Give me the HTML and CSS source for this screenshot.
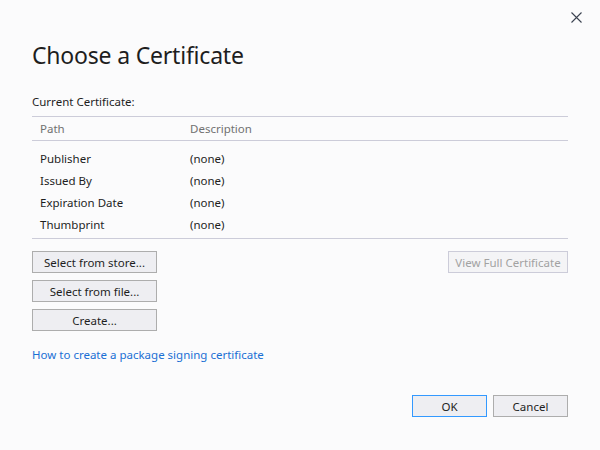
FILE: index.html
```html
<!DOCTYPE html>
<html>
<head>
<meta charset="utf-8">
<link rel="stylesheet" href="styles.css">
</head>
<body>
<div class="dialog">
  <div class="titlebar">
    <span class="close" aria-label="Close">
      <svg width="11" height="11" viewBox="0 0 11 11"><path d="M0.5 0.5 L10.5 10.5 M10.5 0.5 L0.5 10.5" stroke="#3b4250" stroke-width="1.1" fill="none"/></svg>
    </span>
  </div>
  <h1 class="title">Choose a Certificate</h1>
  <div class="label">Current Certificate:</div>
  <div class="table">
    <div class="thead">
      <div class="c1">Path</div>
      <div class="c2">Description</div>
    </div>
    <div class="tbody">
      <div class="row"><div class="c1">Publisher</div><div class="c2">(none)</div></div>
      <div class="row"><div class="c1">Issued By</div><div class="c2">(none)</div></div>
      <div class="row"><div class="c1">Expiration Date</div><div class="c2">(none)</div></div>
      <div class="row"><div class="c1">Thumbprint</div><div class="c2">(none)</div></div>
    </div>
  </div>
  <div class="actions">
    <div class="leftbtns">
      <button class="btn wide">Select from store...</button>
      <button class="btn wide">Select from file...</button>
      <button class="btn wide">Create...</button>
    </div>
    <button class="btn view" disabled>View Full Certificate</button>
  </div>
  <a class="link" href="#">How to create a package signing certificate</a>
  <div class="footer">
    <button class="btn small default">OK</button>
    <button class="btn small">Cancel</button>
  </div>
</div>
</body>
</html>
```

FILE: styles.css
```css
html, body {
  margin: 0;
  padding: 0;
  background: #fbfbfc;
}
.dialog {
  width: 600px;
  height: 450px;
  box-sizing: border-box;
  padding: 0 32px;
  display: flex;
  flex-direction: column;
  font-family: "Noto Sans", "Open Sans", sans-serif;
  font-size: 11.5px;
  color: #1e1e1e;
}
.titlebar {
  height: 34px;
  display: flex;
  justify-content: flex-end;
  align-items: center;
  margin-right: -14px;
}
.close {
  display: flex;
  width: 11px;
  height: 11px;
}
.title {
  margin: 5px 0 0;
  font-size: 23px;
  letter-spacing: -0.2px;
  line-height: 32px;
  font-weight: 400;
  color: #1e1e1e;
}
.label {
  margin-top: 23px;
  line-height: 16px;
}
.table {
  margin-top: 6px;
  border-top: 1px solid #ccccd9;
  border-bottom: 1px solid #ccccd9;
}
.thead {
  display: flex;
  height: 23px;
  align-items: center;
  border-bottom: 1px solid #ccccd9;
  color: #717171;
}
.tbody {
  padding: 6px 0 3px;
}
.row {
  display: flex;
  height: 22px;
  align-items: center;
}
.c1 {
  width: 150px;
  padding-left: 8px;
}
.actions {
  margin-top: 12px;
  display: flex;
  justify-content: space-between;
  align-items: flex-start;
}
.leftbtns {
  display: flex;
  flex-direction: column;
  gap: 7px;
}
.btn {
  height: 22px;
  box-sizing: border-box;
  border: 1px solid #adadad;
  background: #eeeef2;
  font-family: inherit;
  font-size: 11.5px;
  color: #1e1e1e;
  padding: 0;
}
.wide {
  width: 125px;
}
.view {
  width: 120px;
  background: #f4f4f6;
  border-color: #ccccd9;
  color: #a2a2a2;
}
.link {
  margin-top: 16px;
  line-height: 16px;
  color: #1a6fd4;
  text-decoration: none;
  align-self: flex-start;
}
.footer {
  margin-top: 32px;
  display: flex;
  justify-content: flex-end;
  gap: 6px;
}
.small {
  width: 75px;
}
.default {
  border-color: #3399ff;
}
```
